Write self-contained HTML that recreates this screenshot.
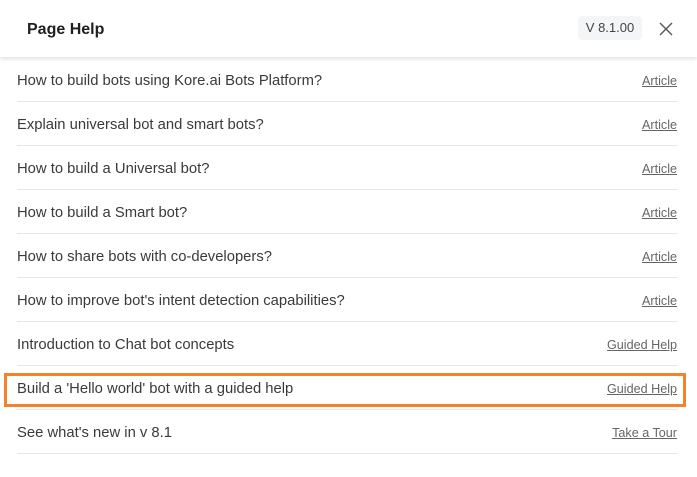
<!DOCTYPE html>
<html><head><style>
body{margin:0;width:697px;height:477px;background:#fff;font-family:"Liberation Sans",sans-serif;position:relative;overflow:hidden}
.hdr{position:absolute;left:0;top:0;width:697px;height:57px;background:#fff;box-shadow:0 2px 4px rgba(0,0,0,0.12);z-index:2}
.title{position:absolute;left:27px;top:21px;font-size:16px;font-weight:bold;color:#1f1f23}
.ver{position:absolute;left:578px;top:16px;width:64px;height:24px;background:#f4f5f7;border-radius:4px;font-size:13px;color:#444;text-align:center;line-height:24px}
.x{position:absolute;left:659px;top:22px}
.row{position:absolute;left:17px;width:660px;height:43px;border-bottom:1px solid #e6e6e8}
.row span{position:absolute;left:0;top:15px;font-size:14.8px;color:#3a3a3e}
.row a{position:absolute;right:0;top:16px;font-size:12.6px;color:#666;text-decoration:underline}
.box{position:absolute;left:4px;top:373px;width:676px;height:28px;border:3px solid #f5822a}
</style></head><body>
<div class="hdr"><div class="title">Page Help</div><div class="ver">V 8.1.00</div>
<svg class="x" width="14" height="14" viewBox="0 0 14 14"><path d="M1 1L13 13M13 1L1 13" stroke="#555" stroke-width="1.4"/></svg></div>
<div class="row" style="top:58px"><span>How to build bots using Kore.ai Bots Platform?</span><a>Article</a></div>
<div class="row" style="top:102px"><span>Explain universal bot and smart bots?</span><a>Article</a></div>
<div class="row" style="top:146px"><span>How to build a Universal bot?</span><a>Article</a></div>
<div class="row" style="top:190px"><span>How to build a Smart bot?</span><a>Article</a></div>
<div class="row" style="top:234px"><span>How to share bots with co-developers?</span><a>Article</a></div>
<div class="row" style="top:278px"><span>How to improve bot's intent detection capabilities?</span><a>Article</a></div>
<div class="row" style="top:322px"><span>Introduction to Chat bot concepts</span><a>Guided Help</a></div>
<div class="row" style="top:366px"><span>Build a 'Hello world' bot with a guided help</span><a>Guided Help</a></div>
<div class="row" style="top:410px"><span>See what's new in v 8.1</span><a>Take a Tour</a></div>
<div class="box"></div>
</body></html>
